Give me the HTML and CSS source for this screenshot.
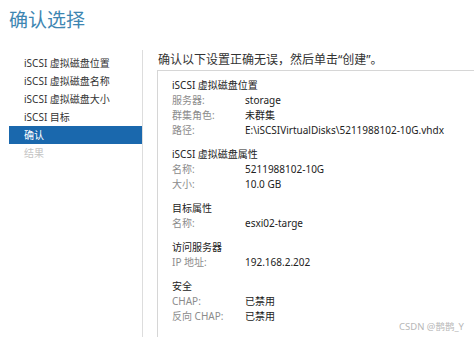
FILE: index.html
```html
<!DOCTYPE html>
<html lang="zh-CN">
<head>
  <meta charset="UTF-8">
  <meta name="viewport" content="width=device-width, initial-scale=1.0">
  <link rel="stylesheet" href="styles.css">
</head>
<body>
  <!-- Page Title -->
  <h1 class="title">确认选择</h1>

  <main class="wizard">
    <!-- Left Section (Steps) -->
    <nav class="steps">
      <ul>
        <li>iSCSI 虚拟磁盘位置</li>
        <li>iSCSI 虚拟磁盘名称</li>
        <li>iSCSI 虚拟磁盘大小</li>
        <li>iSCSI 目标</li>
        <li class="active">确认</li>
        <li class="disabled">结果</li>
      </ul>
    </nav>

    <!-- Right Section (Summary) -->
    <section class="summary">
      <h2>确认以下设置正确无误，然后单击“创建”。</h2>

      <div class="summary-box">
        <div class="group">
          <h3>iSCSI 虚拟磁盘位置</h3>
          <div class="row"><span class="label">服务器:</span><span class="value">storage</span></div>
          <div class="row"><span class="label">群集角色:</span><span class="value">未群集</span></div>
          <div class="row"><span class="label">路径:</span><span class="value">E:\iSCSIVirtualDisks\5211988102-10G.vhdx</span></div>
        </div>

        <div class="group">
          <h3>iSCSI 虚拟磁盘属性</h3>
          <div class="row"><span class="label">名称:</span><span class="value">5211988102-10G</span></div>
          <div class="row"><span class="label">大小:</span><span class="value">10.0 GB</span></div>
        </div>

        <div class="group">
          <h3>目标属性</h3>
          <div class="row"><span class="label">名称:</span><span class="value">esxi02-targe</span></div>
        </div>

        <div class="group">
          <h3>访问服务器</h3>
          <div class="row"><span class="label">IP 地址:</span><span class="value">192.168.2.202</span></div>
        </div>

        <div class="group">
          <h3>安全</h3>
          <div class="row"><span class="label">CHAP:</span><span class="value">已禁用</span></div>
          <div class="row"><span class="label">反向 CHAP:</span><span class="value">已禁用</span></div>
        </div>
      </div>
    </section>
  </main>

  <!-- Watermark -->
  <div class="watermark">CSDN @鹊鹊_Y</div>
</body>
</html>
```

FILE: styles.css
```css
/* General Styles */
body {
  font-family: 'Noto Sans', 'Noto Sans CJK SC', sans-serif;
  margin: 0;
  padding: 0;
  background-color: #FFFFFF;
  color: #222222;
  width: 474px;
  height: 337px;
  overflow: hidden;
  position: relative;
}

/* Title */
.title {
  margin: 0;
  padding: 7px 0 0 9px;
  height: 50px;
  box-sizing: border-box;
  font-size: 19px;
  font-weight: normal;
  line-height: 26px;
  color: #3d86b2;
}

/* Main Layout */
.wizard {
  display: flex;
  height: 287px;
}

/* Left Section (Steps) */
.steps {
  width: 143px;
  flex-shrink: 0;
  border-right: 1px solid #dddddd;
  padding: 4px 0 0 9px;
  box-sizing: border-box;
}

.steps ul {
  list-style: none;
  margin: 0;
  padding: 0;
}

.steps li {
  font-size: 10px;
  line-height: 18px;
  height: 18px;
  padding-left: 15px;
  color: #333333;
}

.steps li.active {
  background-color: #1a68ad;
  color: #FFFFFF;
}

.steps li.disabled {
  color: #c4c4c4;
}

/* Right Section (Summary) */
.summary {
  flex: 1;
  display: flex;
  flex-direction: column;
  padding: 2px 0 0 15px;
}

.summary h2 {
  margin: 0;
  font-size: 12px;
  font-weight: normal;
  line-height: 16px;
  color: #333333;
}

.summary-box {
  flex: 1;
  margin: 2px 0 0 -1px;
  border: 1px solid #d6d6d6;
  border-right: none;
  border-bottom: none;
  padding: 7px 0 0 14px;
}

.group {
  margin-bottom: 9px;
}

.group h3 {
  margin: 0;
  font-size: 10px;
  font-weight: normal;
  line-height: 15px;
  color: #222222;
}

.row {
  display: flex;
  font-size: 10px;
  line-height: 15px;
}

.label {
  width: 73px;
  color: #8c8c8c;
}

.value {
  color: #222222;
}

/* Watermark */
.watermark {
  position: absolute;
  right: 10px;
  bottom: 4px;
  font-size: 9.5px;
  color: #b8b8b8;
}
```
